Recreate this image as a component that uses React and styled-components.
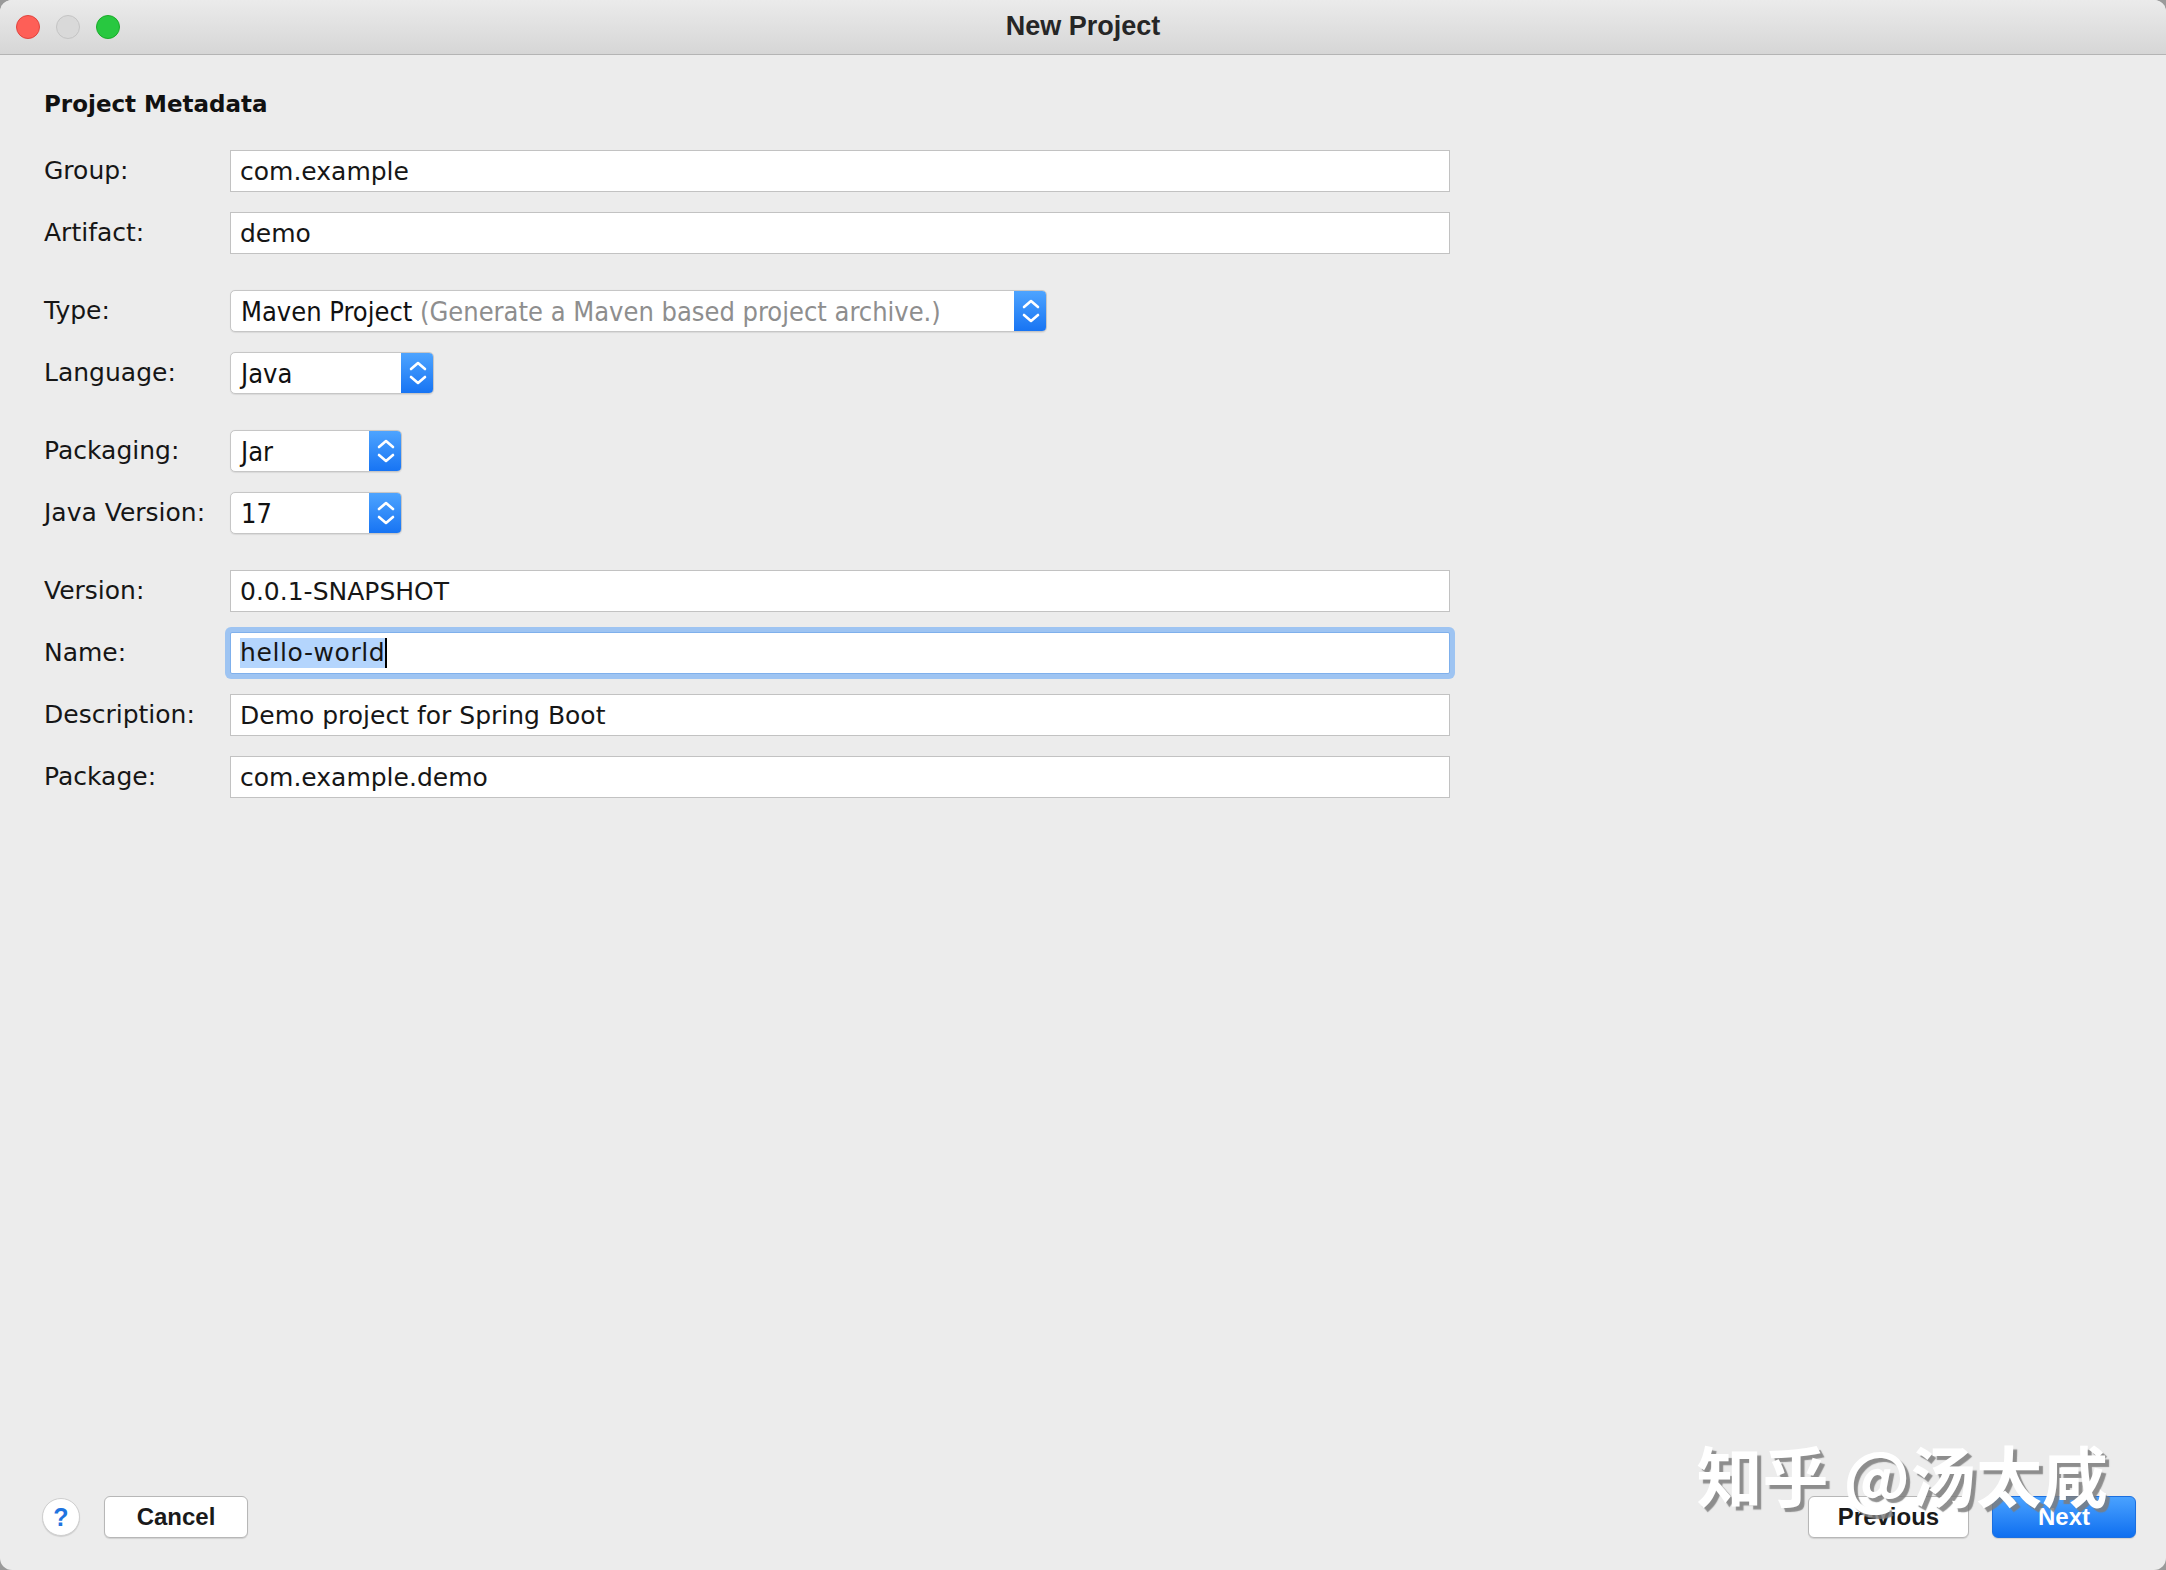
import React from "react";
import styled, { createGlobalStyle } from "styled-components";

const Global = createGlobalStyle`
  html, body { margin: 0; padding: 0; background: #9a9a9a; }
  body { font-family: "DejaVu Sans", "Liberation Sans", sans-serif; }
  * { box-sizing: border-box; }
`;

const Window = styled.div`
  position: relative;
  width: 2166px;
  height: 1570px;
  background: #ececec;
  border-radius: 12px;
  overflow: hidden;
  display: flex;
  flex-direction: column;
`;

const TitleBar = styled.div`
  height: 55px;
  flex: none;
  display: grid;
  grid-template-columns: 1fr auto 1fr;
  align-items: center;
  background: linear-gradient(#ebebeb, #d6d6d6);
  border-bottom: 1px solid #b4b4b4;
  padding: 0 16px;
`;

const Lights = styled.div`
  display: flex;
  gap: 16px;
  align-items: center;
`;

const Light = styled.span`
  width: 24px;
  height: 24px;
  border-radius: 50%;
  background: ${(p) => p.$c};
  border: 1px solid ${(p) => p.$b};
`;

const Title = styled.div`
  font-family: "Liberation Sans", Arial, sans-serif;
  font-weight: 700;
  font-size: 27px;
  color: #262626;
  padding-bottom: 2px;
`;

const Content = styled.div`
  flex: 1;
  padding: 34px 0 0 44px;
  display: flex;
  flex-direction: column;
`;

const Heading = styled.div`
  font-weight: 700;
  font-size: 23px;
  line-height: 30px;
  color: #111;
  margin-bottom: 31px;
`;

const Sections = styled.div`
  display: flex;
  flex-direction: column;
  gap: 36px;
`;

const Section = styled.div`
  display: grid;
  grid-template-columns: 186px auto;
  row-gap: 20px;
  align-items: center;
  justify-items: start;
`;

const Label = styled.div`
  font-size: 25px;
  color: #161616;
  line-height: 42px;
`;

const TextField = styled.div`
  width: 1220px;
  height: 42px;
  background: #fff;
  border: 1px solid #c2c2c2;
  display: flex;
  align-items: center;
  padding-left: 9px;
  font-size: 25px;
  color: #161616;
  box-shadow: ${(p) => (p.$focus ? "0 0 0 5px #9ec4f2" : "none")};
  border-color: ${(p) => (p.$focus ? "#7fb0ec" : "#c2c2c2")};
  border-radius: ${(p) => (p.$focus ? "2px" : "0")};
`;

const Selected = styled.span`
  background: #b4d5fd;
  line-height: 30px;
  letter-spacing: 0.6px;
`;

const Caret = styled.span`
  display: inline-block;
  width: 2px;
  height: 30px;
  background: #000;
`;

const Combo = styled.div`
  width: ${(p) => p.$w}px;
  height: 42px;
  background: #fff;
  border: 1px solid #c6c6c6;
  border-radius: 5px;
  display: flex;
  align-items: center;
  overflow: hidden;
  box-shadow: 0 0.5px 1px rgba(0, 0, 0, 0.08);
`;

const ComboText = styled.div`
  flex: 1;
  padding-left: 10px;
  font-family: "DejaVu Sans Condensed", "DejaVu Sans", sans-serif;
  font-stretch: condensed;
  font-size: 27px;
  color: #111;
  white-space: nowrap;
  overflow: hidden;
`;

const Hint = styled.span`
  color: #8e8e8e;
`;

const Stepper = styled.div`
  width: 33px;
  align-self: stretch;
  margin: -1px -1px -1px 0;
  background: linear-gradient(#4fa5ff, #1673f3);
  border-radius: 0 5px 5px 0;
  display: flex;
  align-items: center;
  justify-content: center;
`;

const Bottom = styled.div`
  flex: none;
  display: flex;
  align-items: center;
  padding: 0 30px 32px 42px;
  gap: 24px;
`;

const Help = styled.div`
  width: 38px;
  height: 38px;
  border-radius: 50%;
  background: #fff;
  border: 1px solid #cfcfcf;
  box-shadow: 0 1px 1px rgba(0, 0, 0, 0.12);
  display: flex;
  align-items: center;
  justify-content: center;
  font-family: "Liberation Sans", Arial, sans-serif;
  font-weight: 700;
  font-size: 25px;
  color: #1f74e0;
`;

const Spacer = styled.div`
  flex: 1;
`;

const Button = styled.div`
  width: ${(p) => p.$w}px;
  height: 42px;
  border-radius: 6px;
  display: flex;
  align-items: center;
  justify-content: center;
  font-family: "Liberation Sans", Arial, sans-serif;
  font-weight: 700;
  font-size: 24px;
  background: ${(p) => (p.$primary ? "linear-gradient(#4aa2ff, #0f6ff0)" : "#fff")};
  color: ${(p) => (p.$primary ? "#fff" : "#1a1a1a")};
  border: 1px solid ${(p) => (p.$primary ? "#1b6fe0" : "#b7b7b7")};
  box-shadow: 0 1px 1px rgba(0, 0, 0, 0.12);
`;

const RightButtons = styled.div`
  display: flex;
  gap: 23px;
`;

const Watermark = styled.div`
  position: absolute;
  right: 58px;
  top: 1436px;
  font-family: "Noto Sans CJK SC", sans-serif;
  font-weight: 700;
  font-size: 66px;
  line-height: 74px;
  color: #fff;
  text-shadow: 4px 4px 1px rgba(125, 125, 125, 0.85);
  white-space: pre;
  pointer-events: none;
`;

const Chevrons = () => (
  <svg width="18" height="26" viewBox="0 0 18 26" fill="none">
    <path d="M2 9 L9 3 L16 9" stroke="#fff" strokeWidth="2.6" strokeLinecap="round" strokeLinejoin="round" />
    <path d="M2 17 L9 23 L16 17" stroke="#fff" strokeWidth="2.6" strokeLinecap="round" strokeLinejoin="round" />
  </svg>
);

const Select = ({ w, children }) => (
  <Combo $w={w}>
    <ComboText>{children}</ComboText>
    <Stepper>
      <Chevrons />
    </Stepper>
  </Combo>
);

export default function App() {
  return (
    <>
      <Global />
      <Window>
        <TitleBar>
          <Lights>
            <Light $c="#fe5f57" $b="#e0443e" />
            <Light $c="#d9d9d9" $b="#c4c4c4" />
            <Light $c="#28c840" $b="#1aab29" />
          </Lights>
          <Title>New Project</Title>
          <div />
        </TitleBar>
        <Content>
          <Heading>Project Metadata</Heading>
          <Sections>
            <Section>
              <Label>Group:</Label>
              <TextField>com.example</TextField>
              <Label>Artifact:</Label>
              <TextField>demo</TextField>
            </Section>
            <Section>
              <Label>Type:</Label>
              <Select w={817}>
                Maven Project <Hint>(Generate a Maven based project archive.)</Hint>
              </Select>
              <Label>Language:</Label>
              <Select w={204}>Java</Select>
            </Section>
            <Section>
              <Label>Packaging:</Label>
              <Select w={172}>Jar</Select>
              <Label>Java Version:</Label>
              <Select w={172}>17</Select>
            </Section>
            <Section>
              <Label>Version:</Label>
              <TextField>0.0.1-SNAPSHOT</TextField>
              <Label>Name:</Label>
              <TextField $focus>
                <Selected>hello-world</Selected>
                <Caret />
              </TextField>
              <Label>Description:</Label>
              <TextField>Demo project for Spring Boot</TextField>
              <Label>Package:</Label>
              <TextField>com.example.demo</TextField>
            </Section>
          </Sections>
        </Content>
        <Bottom>
          <Help>?</Help>
          <Button $w={144}>Cancel</Button>
          <Spacer />
          <RightButtons>
            <Button $w={161}>Previous</Button>
            <Button $w={144} $primary>Next</Button>
          </RightButtons>
        </Bottom>
        <Watermark>{"知乎 @汤太咸"}</Watermark>
      </Window>
    </>
  );
}
